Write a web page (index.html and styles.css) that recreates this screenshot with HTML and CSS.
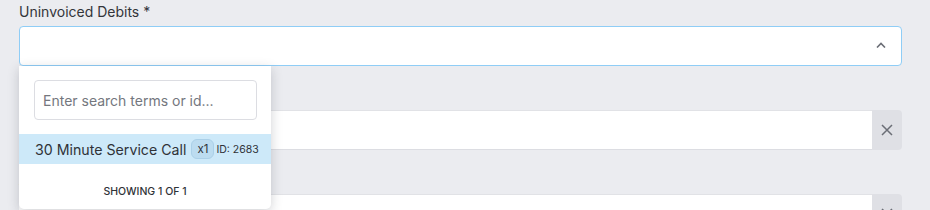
FILE: index.html
```html
<!DOCTYPE html>
<html lang="en">
<head>
  <meta charset="UTF-8">
  <meta name="viewport" content="width=device-width, initial-scale=1.0">
  <title>Uninvoiced Debits</title>
  <link rel="stylesheet" href="styles.css">
</head>
<body>
  <div class="form">
    <div class="field">
      <label class="field-label">Uninvoiced Debits *</label>
      <div class="select open">
        <div class="select-value"></div>
        <svg class="chevron" width="10" height="6" viewBox="0 0 10 6">
          <path d="M1 5.5 L5 1.5 L9 5.5" fill="none" stroke="#6b6e76" stroke-width="1.6"/>
        </svg>
        <div class="dropdown">
          <div class="search">
            <input type="text" placeholder="Enter search terms or id...">
          </div>
          <div class="option active">
            <span class="option-name">30 Minute Service Call</span>
            <span class="badge">x1</span>
            <span class="option-id">ID: 2683</span>
          </div>
          <div class="showing">SHOWING 1 OF 1</div>
        </div>
      </div>
    </div>

    <div class="field">
      <label class="field-label">Description</label>
      <div class="input-group">
        <input type="text" class="text-input">
        <div class="clear">
          <svg width="12" height="12" viewBox="0 0 12 12">
            <path d="M1 1 L11 11 M11 1 L1 11" stroke="#6b6e76" stroke-width="1.5"/>
          </svg>
        </div>
      </div>
    </div>

    <div class="field">
      <label class="field-label">Amount</label>
      <div class="input-group">
        <input type="text" class="text-input">
        <div class="clear">
          <svg width="12" height="12" viewBox="0 0 12 12">
            <path d="M1 1 L11 11 M11 1 L1 11" stroke="#6b6e76" stroke-width="1.5"/>
          </svg>
        </div>
      </div>
    </div>
  </div>
</body>
</html>
```

FILE: styles.css
```css
body, html {
  margin: 0;
  padding: 0;
  width: 100%;
  height: 100%;
  background: #ebecf0;
  font-family: Inter, "Noto Sans", sans-serif;
  color: #33353a;
  overflow: hidden;
}
input {
  outline: none;
  font-family: inherit;
}
.form {
  padding: 3px 28px 0 19px;
}
.field {
  margin-bottom: 21px;
}
.field:last-child {
  margin-bottom: 0;
}
.field-label {
  display: block;
  height: 23px;
  font-size: 14px;
  line-height: 18px;
  color: #33353a;
}
.select {
  position: relative;
  height: 40px;
  border: 1px solid #8fcdf6;
  border-radius: 4px;
  background: #fff;
  box-sizing: border-box;
  display: flex;
  align-items: center;
  justify-content: flex-end;
  padding-right: 15px;
}
.select-value {
  flex: 1;
}
.chevron {
  margin-top: -2px;
}
.dropdown {
  position: absolute;
  top: 39px;
  left: -1px;
  width: 252px;
  height: 143px;
  background: #fff;
  border-radius: 0 0 5px 5px;
  box-shadow: 0 3px 12px rgba(40, 44, 60, 0.22);
  z-index: 10;
  box-sizing: border-box;
  padding-top: 14px;
}
.search {
  padding: 0 14px 0 15px;
}
.search input {
  width: 100%;
  height: 40px;
  box-sizing: border-box;
  border: 1px solid #dcdde2;
  border-radius: 4px;
  padding: 0 8px;
  font-size: 14px;
  color: #333;
}
.search input::placeholder {
  color: #74777e;
}
.option {
  margin-top: 14px;
  height: 30px;
  display: flex;
  align-items: center;
  padding-left: 16px;
  white-space: nowrap;
}
.option.active {
  background: #cde9f9;
}
.option-name {
  font-size: 14.2px;
  color: #2f3237;
}
.badge {
  margin-left: 5px;
  height: 20px;
  line-height: 19px;
  padding: 0 5px;
  font-size: 11.5px;
  background: #bcdcf0;
  border: 1px solid #abd0e8;
  border-radius: 6px;
  box-sizing: border-box;
  color: #2f3237;
}
.option-id {
  margin-left: 2px;
  font-size: 10.5px;
  color: #2f3237;
}
.showing {
  margin-top: 21px;
  text-align: center;
  font-size: 10.5px;
  font-weight: 500;
  color: #2f3237;
}
.input-group {
  display: flex;
  height: 40px;
}
.text-input {
  flex: 1;
  height: 40px;
  box-sizing: border-box;
  border: none;
  border-top: 1px solid #e1e2e6;
  border-bottom: 1px solid #dcdde2;
  border-radius: 4px 0 0 4px;
  background: #fff;
}
.clear {
  width: 30px;
  background: #dfe0e5;
  border-radius: 0 4px 4px 0;
  display: flex;
  align-items: center;
  justify-content: center;
}
```
